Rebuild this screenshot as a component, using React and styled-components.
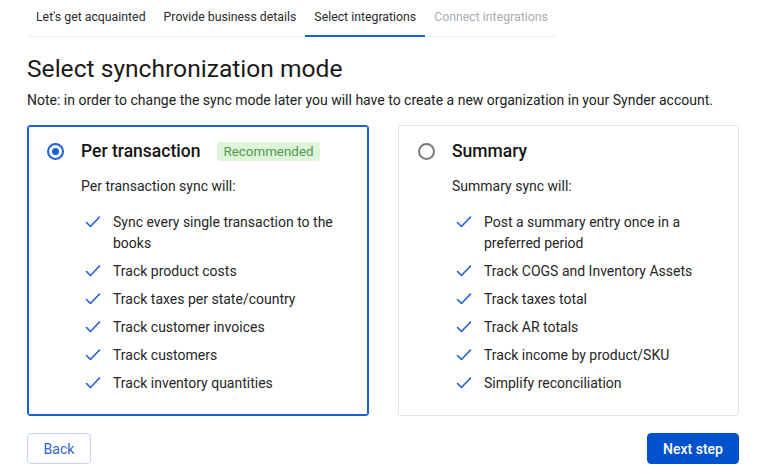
import React, { useState } from 'react';
import styled, { createGlobalStyle, css } from 'styled-components';

const GlobalStyle = createGlobalStyle`
  * { box-sizing: border-box; }
  body {
    margin: 0;
    background: #ffffff;
    font-family: Roboto, 'Liberation Sans', Arial, sans-serif;
    color: #1f1f1f;
  }
`;

const Page = styled.div`
  width: 768px;
  padding: 0 29px 0 27px;
`;

const Tabs = styled.nav`
  display: flex;
  width: 529px;
  border-bottom: 1px solid #eceef2;
`;

const Tab = styled.div`
  padding: 9px 9px 10px;
  font-size: 12.3px;
  line-height: 16px;
  color: ${({ $disabled }) => ($disabled ? '#a9abb0' : '#2b2b2b')};
  border-bottom: 2px solid ${({ $active }) => ($active ? '#1b5fd2' : 'transparent')};
  margin-bottom: -1px;
  white-space: nowrap;
`;

const Heading = styled.h1`
  margin: 18px 0 0;
  font-size: 24.6px;
  line-height: 28px;
  font-weight: 400;
  color: #1a1a1a;
`;

const Note = styled.p`
  margin: 7px 0 0;
  font-size: 14px;
  line-height: 20px;
  color: #222;
`;

const Cards = styled.div`
  display: grid;
  grid-template-columns: 342px 341px;
  justify-content: space-between;
  margin-top: 15px;
`;

const Card = styled.div`
  border: 1px solid #dfe4ec;
  border-radius: 3px;
  padding: 13px 20px 21px 19px;
  cursor: pointer;
  ${({ $selected }) =>
    $selected &&
    css`
      border-color: #1b5fd2;
      box-shadow: inset 0 0 0 1px #1b5fd2;
    `}
`;

const TitleRow = styled.div`
  display: flex;
  align-items: center;
  height: 24px;
`;

const Radio = styled.span`
  width: 17px;
  height: 17px;
  flex: none;
  border-radius: 50%;
  border: 2px solid ${({ $checked }) => ($checked ? '#1b5fd2' : '#7a7a7a')};
  display: flex;
  align-items: center;
  justify-content: center;
  margin-right: 17px;

  &::after {
    content: '';
    width: 7px;
    height: 7px;
    border-radius: 50%;
    background: ${({ $checked }) => ($checked ? '#1b5fd2' : 'transparent')};
  }
`;

const Title = styled.span`
  font-size: 17.5px;
  font-weight: 500;
  color: #161616;
`;

const Badge = styled.span`
  margin-left: 17px;
  padding: 1px 6px;
  border-radius: 3px;
  background: #def5d9;
  color: #4f9a4f;
  font-size: 13.4px;
  line-height: 17px;
`;

const Body = styled.div`
  padding-left: 34px;
`;

const Subtitle = styled.div`
  margin-top: 13px;
  font-size: 14px;
  line-height: 20px;
  color: #262626;
`;

const List = styled.ul`
  list-style: none;
  margin: 16px 0 0;
  padding: 0;
  display: flex;
  flex-direction: column;
  gap: 7px;
`;

const Item = styled.li`
  display: flex;
  align-items: flex-start;
  font-size: 14px;
  line-height: 21px;
  color: #262626;
`;

const CheckWrap = styled.span`
  flex: none;
  width: 32px;
  padding-left: 4px;
  padding-top: 3px;
  display: flex;
`;

const Footer = styled.div`
  display: flex;
  justify-content: space-between;
  margin-top: 17px;
`;

const Button = styled.button`
  height: 31px;
  border-radius: 4px;
  font-family: inherit;
  font-size: 14px;
  cursor: pointer;
  ${({ $primary }) =>
    $primary
      ? css`
          width: 92px;
          background: #0052cc;
          border: 1px solid #0052cc;
          color: #fff;
          font-weight: 500;
        `
      : css`
          width: 64px;
          background: #fff;
          border: 1px solid #c3d3ef;
          color: #2f62c6;
        `}
`;

const Check = () => (
  <svg width="16" height="14" viewBox="0 0 16 14" fill="none">
    <path d="M1.5 7.5 L5.5 11.5 L14.5 2" stroke="#1d5fd6" strokeWidth="1.6" strokeLinecap="round" strokeLinejoin="round" />
  </svg>
);

const modes = [
  {
    id: 'per',
    title: 'Per transaction',
    badge: 'Recommended',
    subtitle: 'Per transaction sync will:',
    items: [
      'Sync every single transaction to the books',
      'Track product costs',
      'Track taxes per state/country',
      'Track customer invoices',
      'Track customers',
      'Track inventory quantities',
    ],
  },
  {
    id: 'summary',
    title: 'Summary',
    subtitle: 'Summary sync will:',
    items: [
      'Post a summary entry once in a preferred period',
      'Track COGS and Inventory Assets',
      'Track taxes total',
      'Track AR totals',
      'Track income by product/SKU',
      'Simplify reconciliation',
    ],
  },
];

export default function App() {
  const [mode, setMode] = useState('per');

  return (
    <>
      <GlobalStyle />
      <Page>
        <Tabs>
          <Tab>Let's get acquainted</Tab>
          <Tab>Provide business details</Tab>
          <Tab $active>Select integrations</Tab>
          <Tab $disabled>Connect integrations</Tab>
        </Tabs>

        <Heading>Select synchronization mode</Heading>
        <Note>
          Note: in order to change the sync mode later you will have to create a new organization in your Synder account.
        </Note>

        <Cards>
          {modes.map((m) => (
            <Card key={m.id} $selected={mode === m.id} onClick={() => setMode(m.id)}>
              <TitleRow>
                <Radio $checked={mode === m.id} />
                <Title>{m.title}</Title>
                {m.badge && <Badge>{m.badge}</Badge>}
              </TitleRow>
              <Body>
                <Subtitle>{m.subtitle}</Subtitle>
                <List>
                  {m.items.map((item) => (
                    <Item key={item}>
                      <CheckWrap>
                        <Check />
                      </CheckWrap>
                      <span>{item}</span>
                    </Item>
                  ))}
                </List>
              </Body>
            </Card>
          ))}
        </Cards>

        <Footer>
          <Button>Back</Button>
          <Button $primary>Next step</Button>
        </Footer>
      </Page>
    </>
  );
}
